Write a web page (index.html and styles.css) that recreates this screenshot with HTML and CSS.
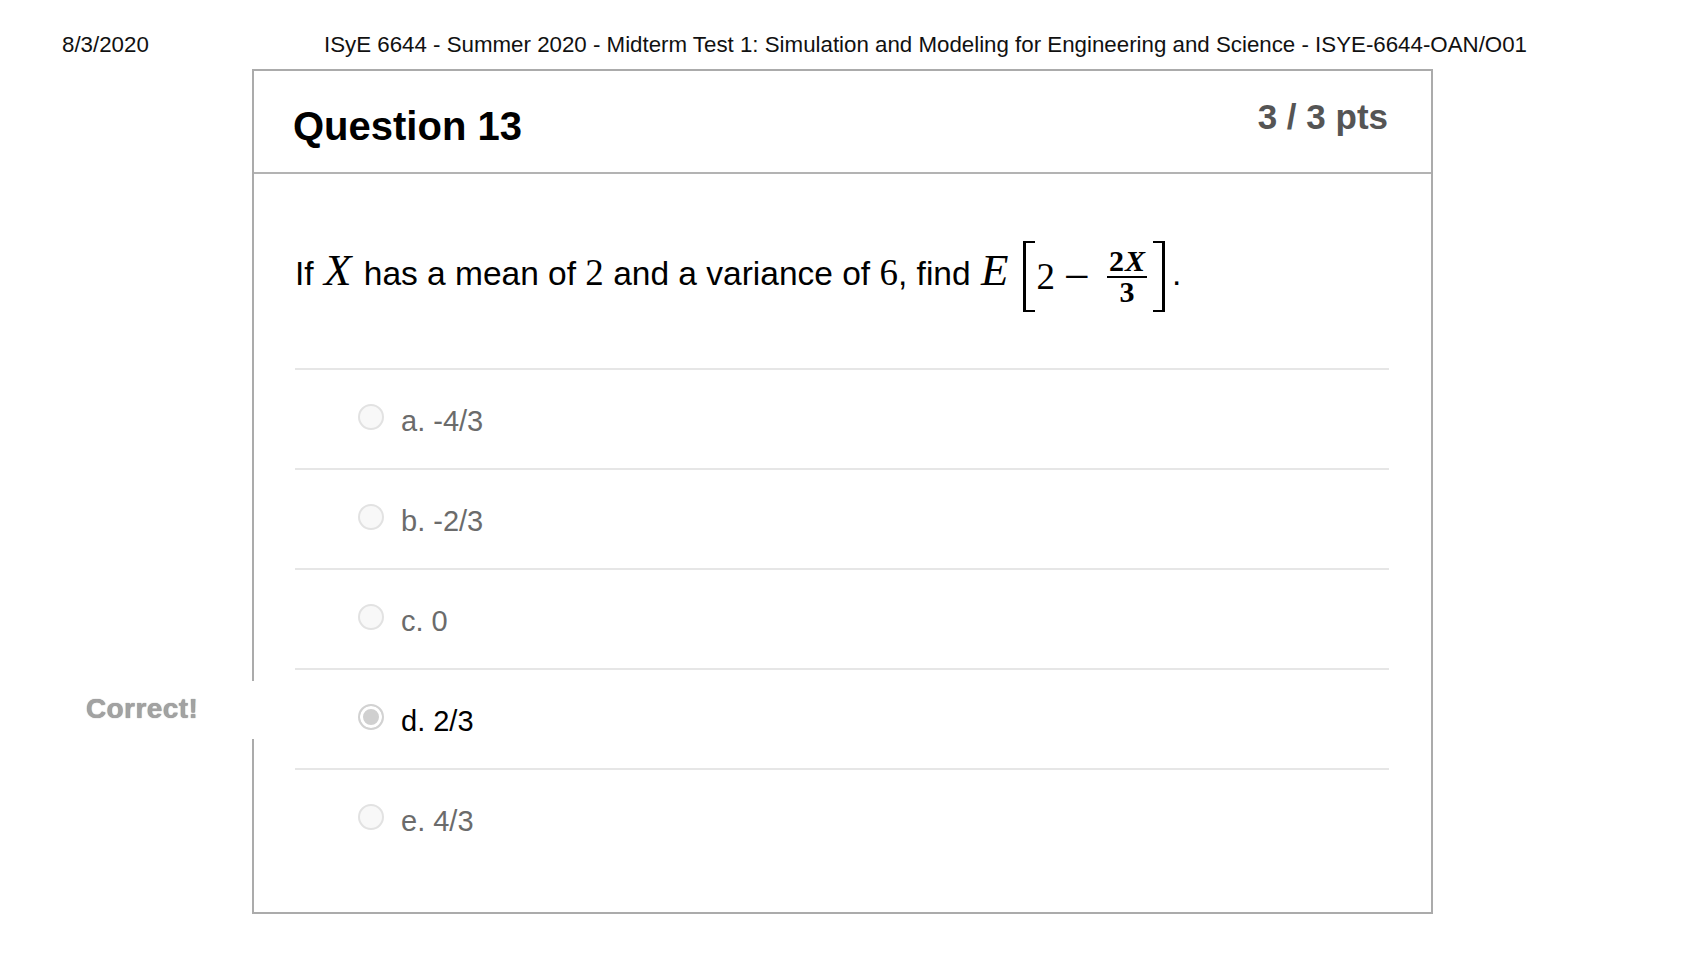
FILE: index.html
```html
<!DOCTYPE html>
<html lang="en">
<head>
<meta charset="utf-8">
<title>ISyE 6644 - Midterm Test 1</title>
<link rel="stylesheet" href="styles.css">
</head>
<body>
<div class="page-header">
  <span class="date">8/3/2020</span>
  <span class="title">ISyE 6644 - Summer 2020 - Midterm Test 1: Simulation and Modeling for Engineering and Science - ISYE-6644-OAN/O01</span>
</div>
<div class="question">
  <div class="q-header">
    <h2 class="q-name">Question 13</h2>
    <div class="pts">3 / 3 pts</div>
  </div>
  <div class="q-body">
    <div class="q-text">If <span class="mi">X</span> has a mean of <span class="mn">2</span> and a variance of <span class="mn">6</span>, find <span class="mi e">E</span><span class="bgroup"><span class="br br-l"></span><span class="mn two">2</span><span class="mo">−</span><span class="frac"><span class="num">2<span class="mi sm">X</span></span><span class="den">3</span></span><span class="br br-r"></span></span>.</div>
    <div class="answers">
      <div class="answer"><span class="radio"></span><span class="label">a. -4/3</span></div>
      <div class="answer"><span class="radio"></span><span class="label">b. -2/3</span></div>
      <div class="answer"><span class="radio"></span><span class="label">c. 0</span></div>
      <div class="answer selected"><div class="flag">Correct!</div><span class="radio"></span><span class="label">d. 2/3</span></div>
      <div class="answer"><span class="radio"></span><span class="label">e. 4/3</span></div>
    </div>
  </div>
</div>
</body>
</html>
```
FILE: styles.css
```css
html, body {
  margin: 0;
  padding: 0;
  background: #fff;
}
body {
  font-family: "Liberation Sans", Arial, sans-serif;
  color: #000;
  width: 1684px;
}
.page-header {
  display: grid;
  grid-template-columns: 262px auto;
  padding: 32px 0 0 62px;
  font-size: 22.3px;
  line-height: 26px;
  height: 26px;
  color: #111;
}
.question {
  margin: 11px 0 0 252px;
  width: 1181px;
  box-sizing: border-box;
  border: 2px solid #ababab;
  position: relative;
}
.q-header {
  box-sizing: border-box;
  border-bottom: 2px solid #b3b3b3;
  display: flex;
  justify-content: space-between;
  align-items: flex-start;
  padding: 0 43px 0 39px;
  height: 103px;
}
.q-name {
  margin: 35px 0 0 0;
  font-size: 40px;
  line-height: 40px;
  font-weight: bold;
  color: #000;
}
.pts {
  margin-top: 28px;
  font-size: 35px;
  line-height: 35px;
  font-weight: bold;
  color: #555;
}
.q-body {
  padding: 0 42px 44px 41px;
}
.q-text {
  padding-top: 67px;
  margin-bottom: 56px;
  font-size: 33.5px;
  line-height: 40px;
  color: #000;
}
.mi, .mn, .mo, .frac {
  font-family: "Liberation Serif", "Times New Roman", serif;
}
.mi {
  font-style: italic;
  font-size: 45px;
  padding: 0 3px 0 1px;
}
.mn {
  font-size: 37px;
}
.e {
  padding-right: 15px;
}
.bgroup {
  display: inline-flex;
  align-items: center;
  height: 71px;
  vertical-align: middle;
  margin-right: 7px;
}
.br {
  display: block;
  width: 12px;
  height: 71px;
  box-sizing: border-box;
  border-top: 2px solid #000;
  border-bottom: 2px solid #000;
}
.br-l {
  border-left: 3px solid #000;
  margin-right: 1px;
}
.br-r {
  border-right: 3px solid #000;
  margin-left: 6px;
}
.two {
  line-height: 40px;
}
.mo {
  font-size: 46px;
  padding: 0 17px 0 9px;
  line-height: 40px;
}
.frac {
  display: inline-flex;
  flex-direction: column;
  align-items: center;
  font-size: 30px;
  line-height: 28px;
  font-weight: bold;
}
.num {
  padding: 0 2px 1px;
  border-bottom: 2px solid #000;
}
.num .sm {
  font-size: 30px;
  padding: 0 0 0 1px;
}
.den {
  padding-top: 0;
}
.answers {
  display: flex;
  flex-direction: column;
}
.answer {
  position: relative;
  height: 100px;
  box-sizing: border-box;
  border-top: 2px solid #e6e6e6;
  display: flex;
  align-items: flex-start;
}
.radio {
  width: 26px;
  height: 26px;
  box-sizing: border-box;
  border-radius: 50%;
  border: 2px solid #e2e2e2;
  background: #f8f8f8;
  margin: 34px 17px 0 63px;
  flex: none;
}
.label {
  margin-top: 35px;
  font-size: 29px;
  line-height: 32px;
  color: #6b6b6b;
}
.selected .radio {
  border-color: #d2d2d2;
  background: #d0d0d0;
  box-shadow: inset 0 0 0 3px #fff;
}
.selected .label {
  color: #000;
}
.flag {
  position: absolute;
  left: -215px;
  top: 11px;
  width: 176px;
  height: 58px;
  box-sizing: border-box;
  padding: 2px 0 0 6px;
  background: #fff;
  font-size: 28px;
  line-height: 52px;
  font-weight: bold;
  letter-spacing: 0.4px;
  color: #a2a2a2;
  text-shadow: 0 0 1px #7a7a7a;
}
```
